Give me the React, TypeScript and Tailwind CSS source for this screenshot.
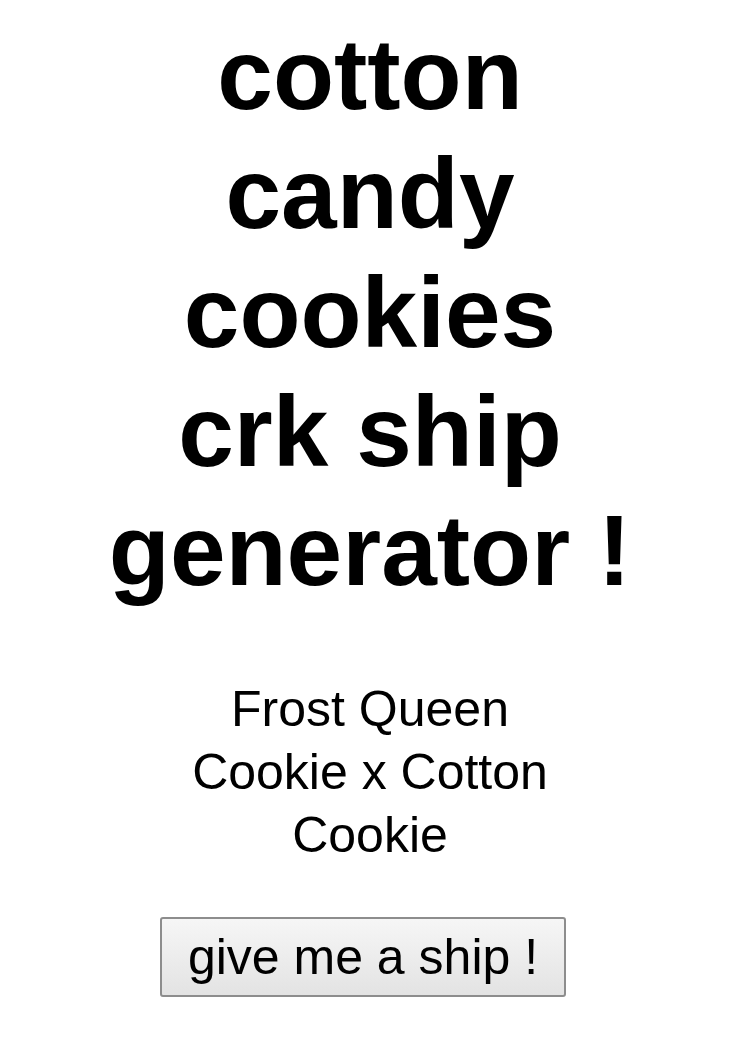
export default function App() {
	return (
		<main className="min-h-screen bg-white text-black font-['Liberation_Sans',Arial,sans-serif]">
			<div className="w-[740px] flex flex-col items-center text-center">
				<h1 className="w-[530px] mt-[15px] text-[100px] leading-[119px] font-bold">
					cotton candy cookies crk ship generator !
				</h1>
				<p className="w-[400px] mt-[68px] text-[50px] leading-[63px]">
					Frost Queen Cookie x Cotton Cookie
				</p>
				<button className="mt-[50px] mr-[14px] h-[80px] px-[26px] text-[50px] leading-none border-2 border-[#8d8d8d] rounded-[3px] bg-gradient-to-b from-[#f6f6f6] to-[#e3e3e3]">
					give me a ship !
				</button>
			</div>
		</main>
	);
}
